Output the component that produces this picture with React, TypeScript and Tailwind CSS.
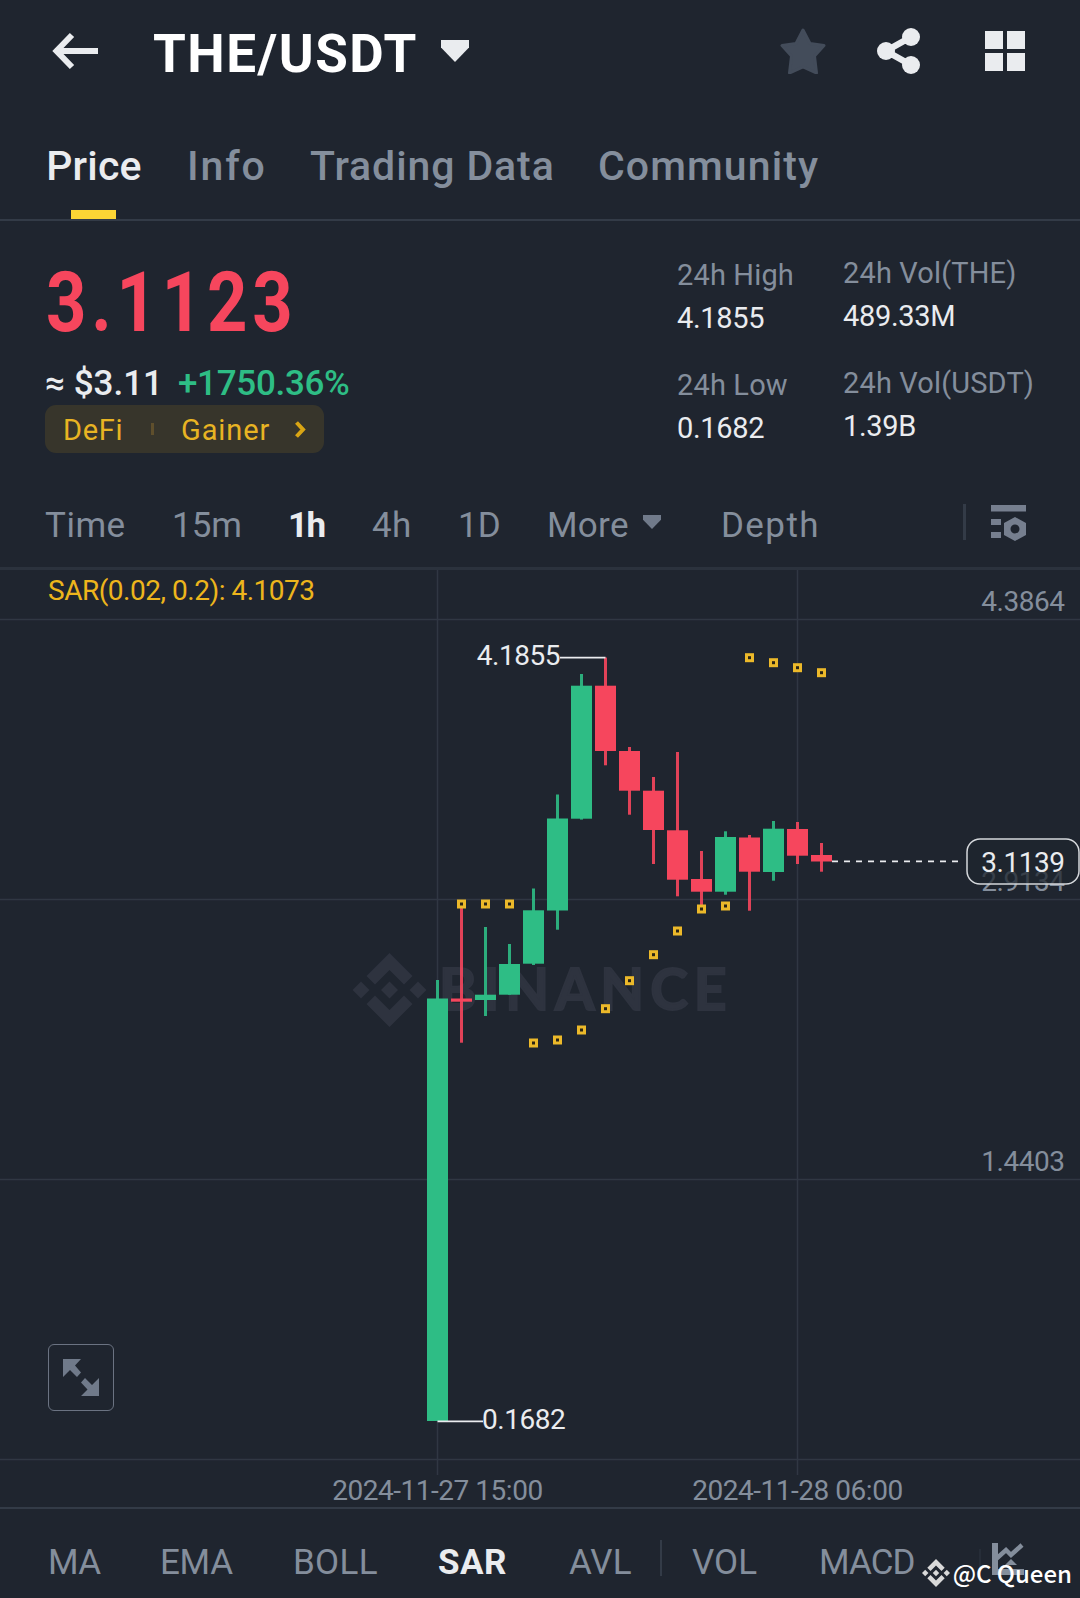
import React from "react";

interface Candle {
  open: number;
  close: number;
  high: number;
  low: number;
  sar: number;
  up: boolean;
}

const GREEN = "#2ebd85";
const RED = "#f6465d";
const FIRST_X = 437.5;
const STEP = 24;

// all values are y positions in the chart's own coordinate space
const candles: Candle[] = [
  { high: 980, open: 998.5, close: 1421, low: 1421, sar: 0, up: true },
  { high: 906, open: 998.5, close: 1001.7, low: 1042.7, sar: 904, up: false },
  { high: 927, open: 994.7, close: 1000, low: 1016, sar: 904, up: true },
  { high: 944, open: 964, close: 994.7, low: 994.7, sar: 904, up: true },
  { high: 888.5, open: 910.3, close: 963.7, low: 965, sar: 1043, up: true },
  { high: 794.5, open: 818.5, close: 910.5, low: 929.7, sar: 1040, up: true },
  { high: 674, open: 685.7, close: 818.7, low: 819.6, sar: 1030, up: true },
  { high: 657.5, open: 685.7, close: 751, low: 765.3, sar: 1008.7, up: false },
  { high: 747, open: 751, close: 790.7, low: 814.7, sar: 980.7, up: false },
  { high: 777, open: 790.7, close: 830, low: 864, sar: 954.7, up: false },
  { high: 752, open: 830.3, close: 879.7, low: 896.3, sar: 931, up: false },
  { high: 851, open: 879, close: 891.7, low: 905, sar: 909, up: false },
  { high: 831.3, open: 837, close: 891.7, low: 894.7, sar: 906, up: true },
  { high: 835, open: 837.5, close: 871.7, low: 910.7, sar: 657.7, up: false },
  { high: 821, open: 828.7, close: 872, low: 880.7, sar: 662.7, up: true },
  { high: 822, open: 829, close: 855.7, low: 864, sar: 667.7, up: false },
  { high: 843, open: 855, close: 861.5, low: 871.7, sar: 672.7, up: false },
];

const BinanceMark = ({ className, ...rest }: React.SVGProps<SVGSVGElement>) => (
  <svg viewBox="0 0 74 74" className={className} fill="currentColor" {...rest}>
    <path d="M37 0 60 23 51.500 31.500 37 17 22.500 31.500 14 23Z" />
    <path d="M37 74 60 51 51.500 42.500 37 57 22.500 42.500 14 51Z" />
    <path d="M8.500 28.500 17 37 8.500 45.500 0 37Z" />
    <path d="M65.500 28.500 74 37 65.500 45.500 57 37Z" />
    <path d="M37 28.500 45.500 37 37 45.500 28.500 37Z" />
  </svg>
);

const Caret = ({ className }: { className: string }) => (
  <svg viewBox="0 0 28 22" preserveAspectRatio="none" className={className} fill="currentColor">
    <path d="M0 0H28V7.500L14 22 0 7.500Z" />
  </svg>
);

const Header = () => (
  <header className="flex h-[102px] items-center pl-[52px] pr-[55px] text-[#eaecef]">
    <svg viewBox="0 0 46 38" className="h-[38px] w-[46px]" fill="none" stroke="currentColor" strokeWidth="6">
      <path d="M46 19H5M20 3 4.500 19 20 35" />
    </svg>
    <h1 className="ml-[55px] w-[274px] pt-[6px] text-[53px] leading-none font-bold tracking-[1.5px] whitespace-nowrap text-white">
      THE/USDT
    </h1>
    <Caret className="mb-[1px] ml-[14px] h-[22px] w-[28px]" />
    <svg viewBox="0 0 46 46" className="ml-auto h-[46px] w-[46px] text-[#434c5a]" fill="currentColor">
      <path
        d="M23 2 30 15.500 44 17.500 34.500 28 36.500 45 23 39 9.500 45 11.500 28 2 17.500 16 15.500Z"
        stroke="currentColor"
        strokeWidth="3"
        strokeLinejoin="round"
      />
    </svg>
    <svg viewBox="0 0 43 46" className="ml-[51px] h-[46px] w-[43px]" fill="currentColor">
      <path d="M34 9 9 23 34 37" fill="none" stroke="currentColor" strokeWidth="6.500" />
      <circle cx="34" cy="9" r="9" />
      <circle cx="9" cy="23" r="9" />
      <circle cx="34" cy="37" r="9" />
    </svg>
    <div className="ml-[65px] grid h-10 w-10 grid-cols-2 gap-1">
      <span className="bg-current" />
      <span className="bg-current" />
      <span className="bg-current" />
      <span className="bg-current" />
    </div>
  </header>
);

const Tabs = () => (
  <nav className="grid h-[119px] grid-cols-[142px_123px_288px_300px] border-b-2 border-[#333b47] pl-[45px] text-[41px] leading-none font-medium whitespace-nowrap text-[#848e9c]">
    <div className="flex w-[97px] flex-col items-center justify-between pt-[44px] text-[#eaecef]">
      <span className="pl-[1px] tracking-[0.2px]">Price</span>
      <span className="h-[9px] w-[45px] bg-[#fcd535]" />
    </div>
    <span className="pt-[44px] tracking-[1.9px]">Info</span>
    <span className="pt-[44px] tracking-[0.9px]">Trading Data</span>
    <span className="pt-[44px] tracking-[1.1px]">Community</span>
  </nav>
);

const Stat = ({ label, value }: { label: string; value: string }) => (
  <div className="text-[29px] leading-[43px] whitespace-nowrap">
    <div className="tracking-[0.15px] text-[#848e9c]">{label}</div>
    <div className="tracking-[-0.3px] text-[#eaecef]">{value}</div>
  </div>
);

const Summary = () => (
  <section className="flex h-[262px] pl-[45px]">
    <div className="w-[632px] pt-[40px]">
      <div className="ml-[1px] h-[83px] w-[290px] origin-left scale-x-[0.85] text-[83px] leading-none font-bold tracking-[5.6px] text-[#f6465d]">
        3.1123
      </div>
      <div className="mt-[22px] flex gap-[15px] text-[35px] leading-none font-medium whitespace-nowrap">
        <span className="text-[#eaecef]">≈ $3.11</span>
        <span className="tracking-[-0.3px] text-[#2ebd85]">+1750.36%</span>
      </div>
      <div className="mt-[4px] flex h-12 w-[279px] items-center rounded-[11px] bg-[#37352b] pl-[18px] text-[29px] leading-none text-[#e8b423]">
        <span className="w-[88px] pt-[2px] tracking-[0.7px]">DeFi</span>
        <span className="h-3 w-[3px] bg-[#5f4f2c]" />
        <span className="ml-[27px] w-[114px] pt-[2px] tracking-[0.9px]">Gainer</span>
        <svg viewBox="0 0 11 17" className="h-[17px] w-[11px]" fill="none" stroke="#d9a514" strokeWidth="4">
          <path d="M1.500 1.500 8 8.500 1.500 15.500" />
        </svg>
      </div>
    </div>
    <div className="flex w-[166px] flex-col gap-6 pt-[33px]">
      <Stat label="24h High" value="4.1855" />
      <Stat label="24h Low" value="0.1682" />
    </div>
    <div className="flex flex-col gap-6 pt-[31px]">
      <Stat label="24h Vol(THE)" value="489.33M" />
      <Stat label="24h Vol(USDT)" value="1.39B" />
    </div>
  </section>
);

const Intervals = () => (
  <section className="flex h-[87px] items-center border-b-3 border-[#2b323d] pl-[45px] text-[35px] leading-none whitespace-nowrap text-[#848e9c]">
    <span className="w-[127px] tracking-[0.5px]">Time</span>
    <span className="w-[116px]">15m</span>
    <span className="w-[84px] font-bold tracking-[-1.5px] text-[#eaecef]">1h</span>
    <span className="w-[86px] tracking-[0.3px]">4h</span>
    <span className="w-[89px]">1D</span>
    <span className="w-[96px] tracking-[0.3px]">More</span>
    <Caret className="mb-[6px] h-[14px] w-[18px] text-[#707a8a]" />
    <span className="ml-[60px] w-[242px] tracking-[1.4px]">Depth</span>
    <span className="mb-[6px] h-9 w-[3px] bg-[#333b47]" />
    <svg viewBox="0 0 35 36" className="mb-[4px] ml-[25px] h-9 w-[35px] text-[#767f8f]" fill="currentColor">
      <path d="M0 0H35V6.500H0ZM0 14H10V20H0ZM0 27H10V33H0Z" />
      <path d="M24 12 35 18V30L24 36 13 30V18ZM24 19.500A4.500 4.500 0 1 0 24 28.500 4.500 4.500 0 1 0 24 19.500Z" fillRule="evenodd" />
    </svg>
  </section>
);

const Chart = () => (
  <section className="relative h-[939px] border-b-2 border-[#333b47]">
    <svg viewBox="0 570 1080 937" className="block h-[937px] w-[1080px] text-[28px] tracking-[-0.48px]">
      <g stroke="#303743" strokeWidth="1.500">
        <path d="M0 619.500H1080M0 899.500H1080M0 1179.500H1080M0 1459.500H1080" />
        <path d="M437.500 570V1475M797.500 570V1475" />
      </g>

      <g className="text-[#2e333f]">
        <BinanceMark x="352.500" y="953" width="74" height="74" />
        <text x="439" y="1010" textLength="287" className="fill-current font-[Lato] text-[57px] font-bold" stroke="currentColor" strokeWidth="2">
          BINANCE
        </text>
      </g>

      {candles.map((c, i) => {
        const x = FIRST_X + i * STEP;
        const color = c.up ? GREEN : RED;
        return (
          <g key={i} fill={color}>
            <rect x={x - 1.5} y={c.high} width="3" height={c.low - c.high} opacity="0.9" />
            <rect x={x - 10.5} y={c.open} width="21" height={c.close - c.open} />
          </g>
        );
      })}
      {candles.map((c, i) =>
        c.sar ? (
          <rect key={i} x={FIRST_X + i * STEP - 3} y={c.sar - 3} width="6" height="6" fill="#2a2415" stroke="#ecb92a" strokeWidth="3" />
        ) : null
      )}

      <g stroke="#eaecef" strokeWidth="1.800">
        <path d="M560 657.700H605.500M437.500 1421.300H483" />
        <path d="M832 861.300H958" strokeDasharray="6 6" />
      </g>

      <text x="48" y="600" fill="#edb51c">SAR(0.02, 0.2): 4.1073</text>
      <g fill="#848e9c">
        <text x="1064.500" y="611" textAnchor="end">4.3864</text>
        <text x="1064.500" y="891" textAnchor="end">2.9134</text>
        <text x="1064.500" y="1171" textAnchor="end">1.4403</text>
        <text x="437.500" y="1500" textAnchor="middle">2024-11-27 15:00</text>
        <text x="797.500" y="1500" textAnchor="middle">2024-11-28 06:00</text>
      </g>

      <rect x="967" y="839" width="112" height="45" rx="13" fill="#1f252f" fillOpacity="0.75" stroke="#d5d8dc" strokeWidth="1.500" />
      <g fill="#eaecef">
        <text x="1064.500" y="872" textAnchor="end">3.1139</text>
        <text x="560" y="665" textAnchor="end">4.1855</text>
        <text x="482" y="1429">0.1682</text>
      </g>
    </svg>
    <button className="absolute top-[774px] left-12 flex h-[67px] w-[66px] items-center justify-center rounded-[6px] border-[1.5px] border-[#6b7382]">
      <svg viewBox="0 0 36 37" className="h-[37px] w-9" fill="#707a8a">
        <path d="M0 0H18L12 6.500 18 13.500 14 18 7 11 0 18Z" />
        <path d="M36 37H18L24.500 30.500 18 23.500 22 19 29 26 36 19Z" />
      </svg>
    </button>
  </section>
);

const Indicators = () => (
  <section className="flex h-[89px] items-start pt-[36px] pl-[48px] text-[35px] leading-none whitespace-nowrap text-[#848e9c]">
    <span className="w-[112px] tracking-[-0.5px]">MA</span>
    <span className="w-[133px] tracking-[-0.3px]">EMA</span>
    <span className="w-[145px] tracking-[0.3px]">BOLL</span>
    <span className="w-[131px] font-bold tracking-[0.5px] text-[#eaecef]">SAR</span>
    <span className="w-[91px]">AVL</span>
    <span className="-mt-[5px] h-9 w-[2px] bg-[#333b47]" />
    <span className="ml-[30px] w-[127px]">VOL</span>
    <span className="w-[160px] tracking-[-0.9px]">MACD</span>
    <span className="mt-1 h-6 w-[2px] bg-[#262d38]" />
    <svg viewBox="0 0 32 32" className="-mt-[2px] ml-[11px] h-8 w-8" fill="currentColor">
      <path d="M0 0H6V26H32V32H0Z" />
      <path d="M4 16 14 7 19 12 30 2" fill="none" stroke="currentColor" strokeWidth="4.500" />
      <path d="M19 16 25 22H13Z" />
    </svg>
  </section>
);

export default function App() {
  return (
    <main className="relative h-[1598px] w-[1080px] overflow-hidden bg-[#1f252f] font-[Roboto,sans-serif]">
      <Header />
      <Tabs />
      <Summary />
      <Intervals />
      <Chart />
      <Indicators />
      <div className="absolute right-[8px] bottom-[7px] flex items-center gap-[3px] font-['Noto_Sans_CJK_SC',sans-serif] text-[24px] leading-[36px] font-medium whitespace-nowrap text-white">
        <BinanceMark className="h-7 w-7 text-[#d9d9d9]" />
        <span>@C Queen</span>
      </div>
    </main>
  );
}
